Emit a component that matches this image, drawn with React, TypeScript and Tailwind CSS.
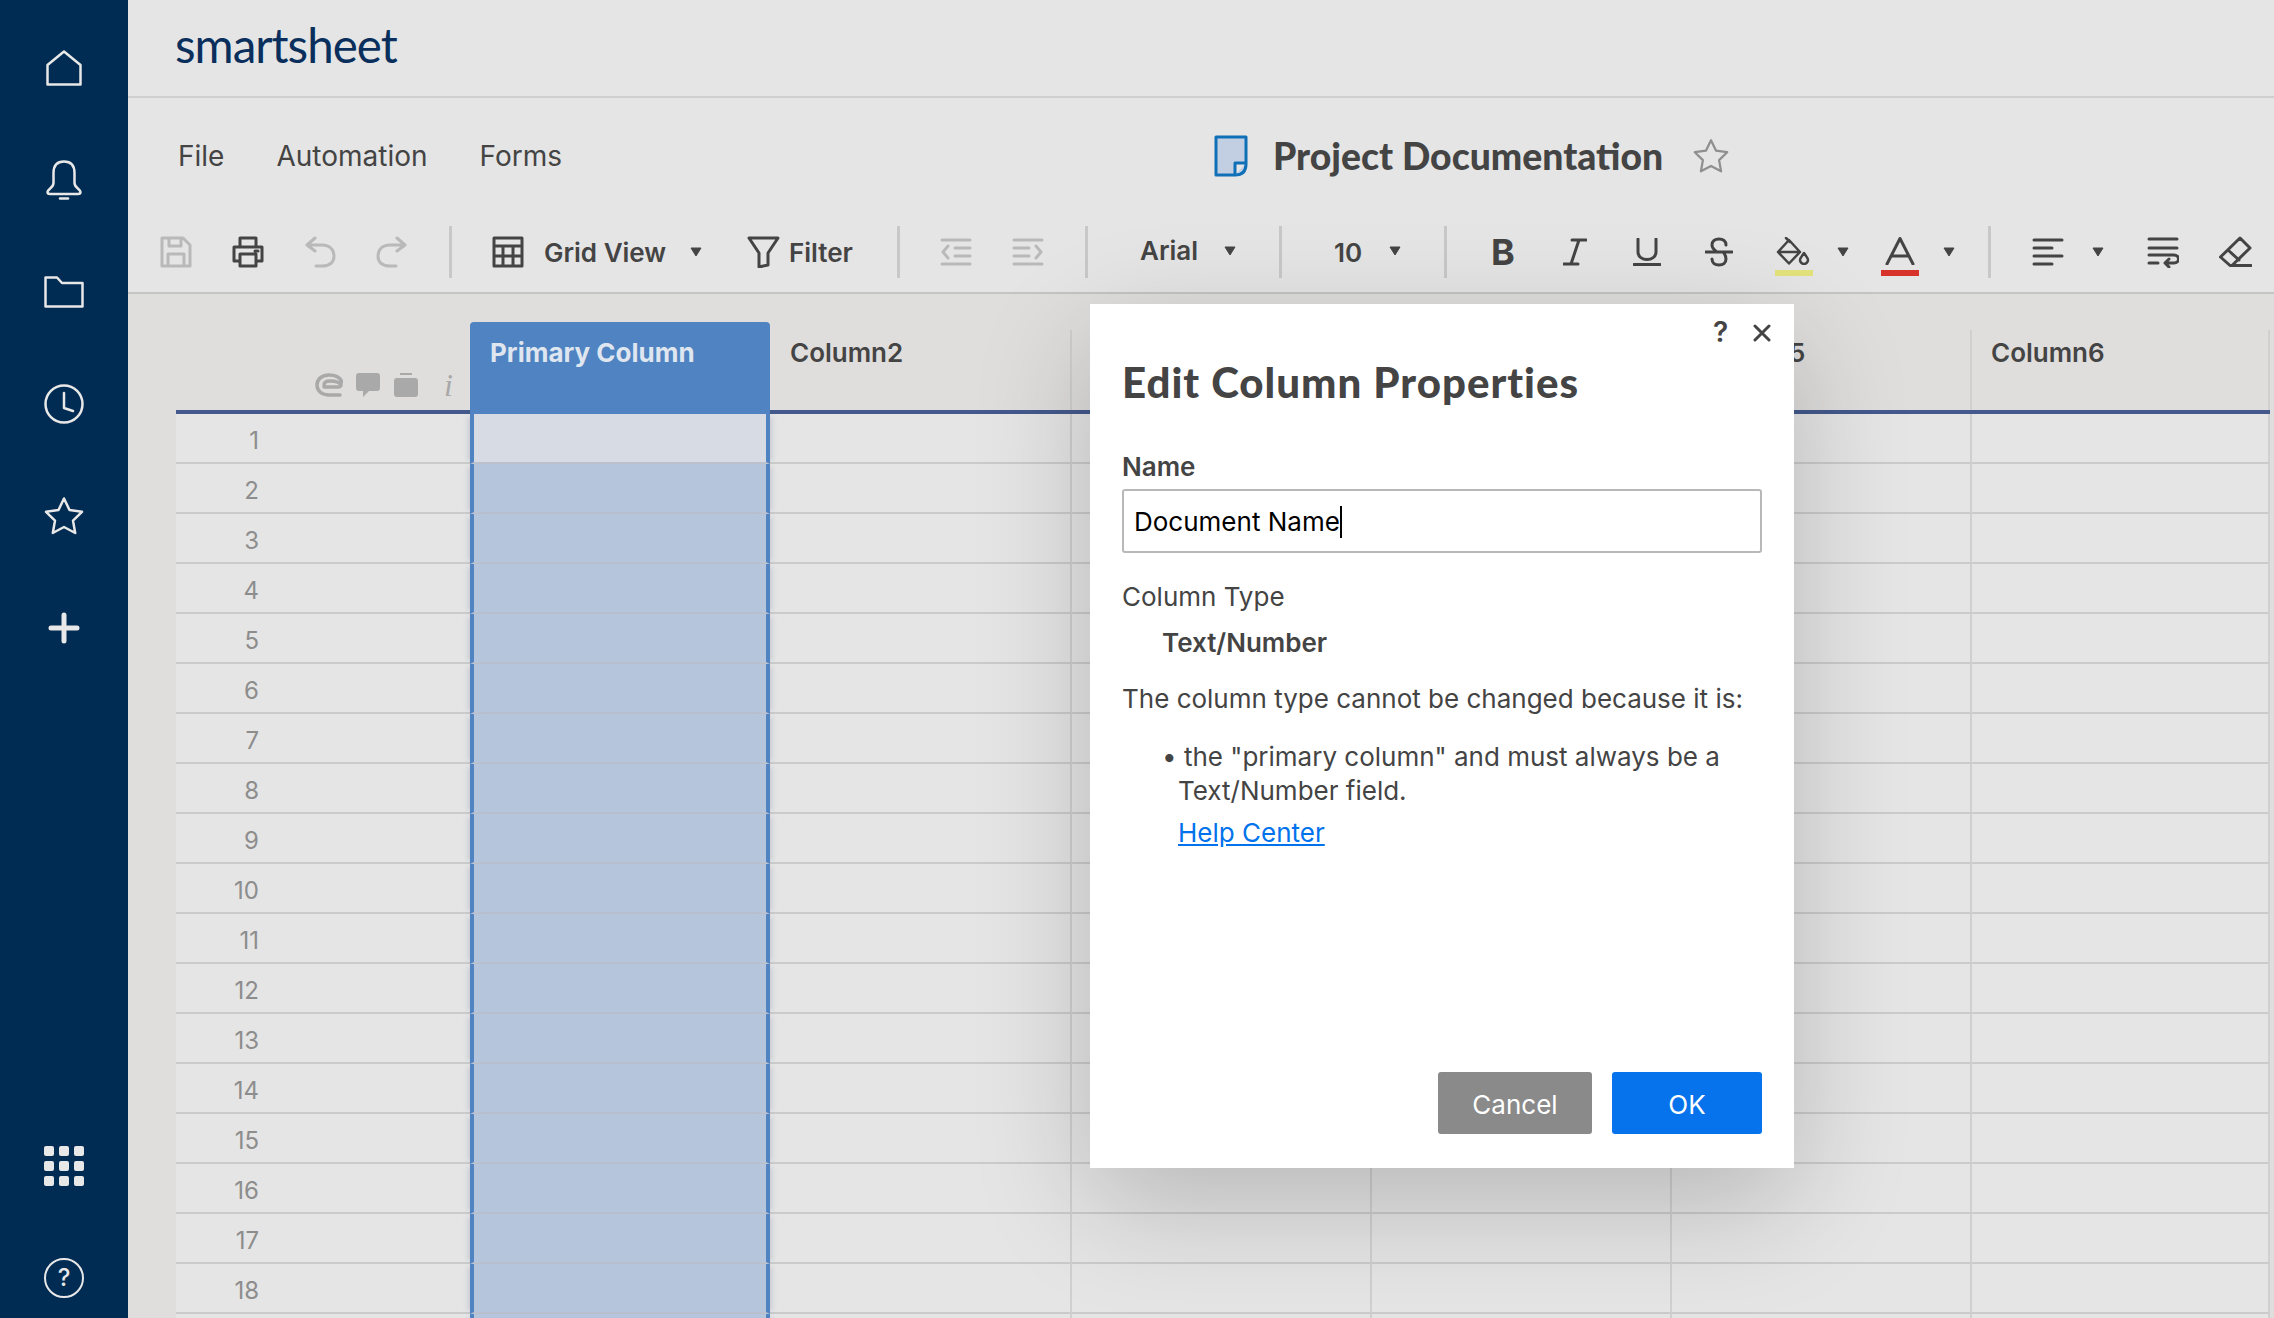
import React from "react";

const D = "#444444";
const G = "#b9b9b9";
const W = "#e8e8e8";

function Caret() {
  return (
    <svg width="12" height="10" viewBox="0 0 12 10" className="shrink-0">
      <path d="M1 1 H11 L6 9 Z" fill={D} stroke={D} strokeWidth="1" strokeLinejoin="round" />
    </svg>
  );
}

function Sep({ className }: { className: string }) {
  return <div className={"w-[3px] h-[52px] bg-[#c8c8c8] shrink-0 " + className} />;
}

function Ico({ w, h, c = D, sw = 3, className = "", children }: { w: number; h: number; c?: string; sw?: number; className?: string; children: React.ReactNode }) {
  return (
    <svg width={w} height={h} viewBox={`0 0 ${w} ${h}`} fill="none" stroke={c} strokeWidth={sw} strokeLinejoin="round" strokeLinecap="round" className={"shrink-0 " + className}>
      {children}
    </svg>
  );
}

function Sidebar() {
  return (
    <aside className="w-[128px] shrink-0 bg-[#002b52] flex flex-col items-center pt-[50px] pb-[20px]">
      <Ico w={36} h={36} c={W} sw={2.5}><path d="M1.5 15 L18 1.5 L34.5 15 V34.5 H1.5 Z" /></Ico>
      <Ico w={36} h={40} c={W} sw={2.5} className="mt-[74px]"><path d="M18 1.5 C11 1.5 7.5 6 7.5 13 V23 C7.5 28 1.5 29 1.5 32 C1.5 33.5 3 34 4 34 H32 C33 34 34.5 33.5 34.5 32 C34.5 29 28.5 28 28.5 23 V13 C28.5 6 25 1.5 18 1.5 Z" /><path d="M14 38.5 H22" /></Ico>
      <Ico w={40} h={32} c={W} sw={2.5} className="mt-[76px]"><path d="M1.5 1.5 H13 L18 7 H38.5 V30.5 H1.5 Z" /></Ico>
      <Ico w={40} h={40} c={W} sw={2.5} className="mt-[76px]"><circle cx="20" cy="20" r="18.5" /><path d="M20 9 V24 L29 27" /></Ico>
      <Ico w={40} h={40} c={W} sw={2.5} className="mt-[72px]"><path d="M20 2.5 L25.5 14 L38 15.8 L29 24.6 L31.2 37 L20 31 L8.8 37 L11 24.6 L2 15.8 L14.5 14 Z" /></Ico>
      <Ico w={32} h={32} c={W} sw={5} className="mt-[76px]"><path d="M16 3 V29 M3 16 H29" /></Ico>
      <div className="mt-auto grid grid-cols-3 gap-x-[5px] gap-y-[5px] w-[40px]">
        {Array.from({ length: 9 }).map((_, i) => (
          <div key={i} className="w-[10px] h-[10px] rounded-[2px] bg-[#e8e8e8]" />
        ))}
      </div>
      <div className="mt-[72px] w-[40px] h-[40px] rounded-full border-[2.5px] border-[#e8e8e8] flex items-center justify-center text-[#e8e8e8] text-[24px] leading-none font-medium">?</div>
    </aside>
  );
}

function Toolbar() {
  return (
    <div className="h-[76px] pb-[2px] flex items-center border-b-2 border-[#c4c4c0] box-content pl-[32px] text-[#444444] text-[26px] font-semibold whitespace-nowrap">
      <Ico w={32} h={32} c={G}><path d="M2 2 H23 L30 9 V30 H2 Z M9 2 V10 H21 V2 M8 30 V18 H24 V30" /></Ico>
      <Ico w={32} h={32} className="ml-[40px]"><path d="M8 10 V2 H24 V10 M8 25 H2 V11 H30 V25 H24 M8 18 H24 V30 H8 Z M23 15 H26" /></Ico>
      <Ico w={32} h={32} c={G} className="ml-[40px]"><path d="M11 2 L3 9 L11 15 M3 9 H18 C26 9 30 14 30 20 C30 26 26 30 18 30 H12" /></Ico>
      <Ico w={32} h={32} c={G} className="ml-[40px]"><path d="M21 2 L29 9 L21 15 M29 9 H14 C6 9 2 14 2 20 C2 26 6 30 14 30 H20" /></Ico>
      <Sep className="ml-[41px]" />
      <Ico w={32} h={32} className="ml-[40px]"><path d="M2 2 H30 V30 H2 Z M2 10 H30 M2 20 H30 M11 10 V30 M21 10 V30" /></Ico>
      <span className="ml-[20px] w-[121px]">Grid View</span>
      <div className="ml-[25px]"><Caret /></div>
      <Ico w={33} h={32} className="ml-[45px]"><path d="M2 2 H31 L21 17 V29 L12 31 V17 Z" /></Ico>
      <span className="ml-[9px] w-[63px]">Filter</span>
      <Sep className="ml-[45px]" />
      <Ico w={32} h={28} c={G} className="ml-[40px]"><path d="M2 2 H30 M2 26 H30 M15 10 H30 M15 18 H30 M8 8 L3 14 L8 20" /></Ico>
      <Ico w={32} h={28} c={G} className="ml-[40px]"><path d="M2 2 H30 M2 26 H30 M2 10 H17 M2 18 H17 M24 8 L29 14 L24 20" /></Ico>
      <Sep className="ml-[41px]" />
      <span className="ml-[52px] w-[57px] -mt-[3px]">Arial</span>
      <div className="ml-[27px] -mt-[3px]"><Caret /></div>
      <Sep className="ml-[43px]" />
      <span className="ml-[52px] w-[29px]">10</span>
      <div className="ml-[26px] -mt-[3px]"><Caret /></div>
      <Sep className="ml-[43px]" />
      <span className="ml-[44px] w-[24px] text-[36px] font-bold leading-none">B</span>
      <Ico w={24} h={28} className="ml-[48px]"><path d="M9 2 H23 M1 26 H15 M16 2 L8 26" /></Ico>
      <Ico w={28} h={28} className="ml-[46px]"><path d="M5 1 V14 C5 24 23 24 23 14 V1 M1 26.5 H27" /></Ico>
      <Ico w={28} h={30} className="ml-[44px]"><path d="M1 15 H27 M21 8 C21 4 18 2 14 2 C10 2 7 4 7 8 C7 11 9 13 12 15 M18 15 C20 17 21 19 21 22 C21 26 18 28 14 28 C10 28 7 26 7 22" /></Ico>
      <div className="ml-[42px] w-[38px] flex flex-col items-center mt-[8px]">
        <Ico w={38} h={28} sw={2.5}><path d="M11 1 L15 5 M14 3 L3 15 L14 26.5 L25 15 Z M3 15 H25 M29 16 C27 19 25 21 25 23 C25 25 27 27 29 27 C31 27 33 25 33 23 C33 21 31 19 29 16 Z" /></Ico>
        <div className="w-[38px] h-[6px] bg-[#e4e27c] mt-[5px]" />
      </div>
      <div className="ml-[24px]"><Caret /></div>
      <div className="ml-[32px] w-[38px] flex flex-col items-center mt-[8px]">
        <Ico w={30} h={28}><path d="M2 27 L15 1.5 L28 27 M7 19 H23" /></Ico>
        <div className="w-[38px] h-[6px] bg-[#d8332a] mt-[5px]" />
      </div>
      <div className="ml-[24px]"><Caret /></div>
      <Sep className="ml-[33px]" />
      <Ico w={32} h={28} className="ml-[41px]"><path d="M2 2 H30 M2 10 H20 M2 18 H30 M2 26 H20" /></Ico>
      <div className="ml-[28px]"><Caret /></div>
      <Ico w={32} h={32} className="ml-[43px]"><path d="M2 3 H30 M2 12 H30 M2 19 H27 C33 19 33 27 27 27 H18 M2 27 H11 M22 23 L18 27 L22 31" /></Ico>
      <Ico w={33} h={32} className="ml-[40px]"><path d="M21 2 L31 12 L13 29.5 H11 L1.5 21 Z M9 14 L20 24 M13 29.5 H32" /></Ico>
    </div>
  );
}

const columns = ["Column2", "", "", "Column5", "Column6"];
const colWidths = ["w-[302px]", "w-[300px]", "w-[300px]", "w-[300px]", "w-[298px]"];
const colPads = ["pl-[20px]", "pl-[20px]", "pl-[20px]", "pl-[20px]", "pl-[19px]"];

function SheetHeader() {
  return (
    <div className="flex h-[116px] shrink-0 text-[26px] font-semibold text-[#444444]">
      <div className="w-[294px] flex items-end justify-end gap-[14px] pr-[18px] pb-[13px]">
        <Ico w={28} h={24} c="#a9a9a9" sw={3.5} className="-mr-[1px]"><path d="M27 9 C25 4 20 2 14 2 C6 2 2 7 2 12 C2 18 7 22 14 22 H25 M9 12 C9 9 12 8 15 8 C19 8 24 8 26 12 C26 13 25 14 24 14 H9" /></Ico>
        <svg width="24" height="24" viewBox="0 0 24 24" className="shrink-0"><path d="M3 0 H21 a3 3 0 0 1 3 3 V15 a3 3 0 0 1 -3 3 H13 L7 24 V18 H3 a3 3 0 0 1 -3 -3 V3 a3 3 0 0 1 3 -3 Z" fill="#a9a9a9" /></svg>
        <svg width="24" height="24" viewBox="0 0 24 24" className="shrink-0"><path d="M6 0 H18 V2 H6 Z" fill="#a9a9a9" /><rect x="0" y="5" width="24" height="19" rx="3" fill="#a9a9a9" /></svg>
        <span className="ml-[12px] w-[8px] text-[#a9a9a9] font-['Liberation_Serif',serif] italic font-normal text-[32px] leading-[24px]">i</span>
      </div>
      <div className="w-[300px] mt-[28px] bg-[#5083c1] rounded-t-[4px] text-[#dfe6f0] font-bold px-[20px] pt-[15px] leading-[32px] whitespace-nowrap">Primary Column</div>
      {columns.map((c, i) => (
        <div key={i} className={"mt-[36px] pt-[7px] leading-[32px] border-r-2 border-[#d0d0d0] " + colWidths[i] + " " + colPads[i]}>{c}</div>
      ))}
    </div>
  );
}

function SheetRow({ n }: { n: number }) {
  return (
    <div className="flex h-[50px] shrink-0">
      <div className="w-[294px] h-[50px] bg-[#e5e5e5] border-b-2 border-[#cbcbcb] pr-[211px] text-right text-[24px] leading-[54px] text-[#8d8d8d]">{n}</div>
      <div className={"relative z-10 w-[300px] h-[50px] border-x-4 border-x-[#5083c1] border-b-2 shadow-[5px_0_5px_-3px_rgba(80,100,140,0.2),-5px_0_5px_-3px_rgba(80,100,140,0.2)] " + (n === 1 ? "bg-[#d6dbe4] border-b-[#bfc5cf]" : "bg-[#b4c5dc] border-b-[#bcc3d0]")} />
      {colWidths.map((w, i) => (
        <div key={i} className={"h-[50px] bg-[#e5e5e5] border-b-2 border-b-[#cbcbcb] border-r-2 border-r-[#d0d0d0] " + w} />
      ))}
    </div>
  );
}

function Sheet() {
  return (
    <div className="flex-1 min-h-0 bg-[#dfdedd] pl-[48px] overflow-hidden">
      <SheetHeader />
      <div className="relative z-20 flex h-[4px] w-[2094px] bg-[#44598c]">
        <div className="w-[294px]" />
        <div className="w-[300px] bg-[#5083c1]" />
      </div>
      {Array.from({ length: 19 }).map((_, i) => (
        <SheetRow key={i} n={i + 1} />
      ))}
    </div>
  );
}

function Dialog() {
  return (
    <div className="absolute z-30 left-[1090px] top-[304px] w-[704px] h-[864px] bg-white shadow-[0_36px_110px_rgba(0,0,0,0.2)] flex flex-col pl-[32px] pr-[32px] pt-[54px] pb-[34px] text-[#444444] text-[26px]">
      <div className="absolute left-[623px] top-[12px] text-[28px] leading-[32px] font-semibold">?</div>
      <svg width="18" height="18" viewBox="0 0 18 18" className="absolute left-[663px] top-[20px]" fill="none" stroke={D} strokeWidth="3" strokeLinecap="round"><path d="M2 2 L16 16 M16 2 L2 16" /></svg>
      <h2 className="font-['Lato',sans-serif] font-black text-[42px] tracking-[1px] leading-[48px] text-[#444444] whitespace-nowrap">Edit Column Properties</h2>
      <div className="mt-[45px] font-semibold leading-[32px]">Name</div>
      <div className="mt-[6px] h-[64px] border-2 border-[#b8b8b8] rounded-[3px] flex items-center pl-[10px] pt-[1px] text-black">
        <span>Document Name</span>
        <span className="w-[2px] h-[32px] bg-black" />
      </div>
      <div className="mt-[28px] leading-[32px]">Column Type</div>
      <div className="mt-[14px] pl-[40px] font-semibold leading-[32px]">Text/Number</div>
      <div className="mt-[24px] leading-[32px]">The column type cannot be changed because it is:</div>
      <div className="mt-[25px] pl-[56px] -indent-[16px] leading-[34px] pr-[30px]">
        <span>•</span> the "primary column" and must always be a Text/Number field.
      </div>
      <a className="mt-[9px] ml-[56px] leading-[32px] text-[#0073ec] underline self-start">Help Center</a>
      <div className="mt-auto flex justify-end gap-[20px] text-white">
        <button className="w-[154px] h-[62px] rounded-[3px] bg-[#8a8a8a] pt-[3px]">Cancel</button>
        <button className="w-[150px] h-[62px] rounded-[3px] bg-[#0673ec] pt-[3px]">OK</button>
      </div>
    </div>
  );
}

export default function App() {
  return (
    <div className="relative w-[2274px] h-[1318px] overflow-hidden flex bg-[#e5e5e5] font-['Inter',sans-serif]">
      <Sidebar />
      <main className="flex-1 min-w-0 flex flex-col">
        <header className="h-[98px] shrink-0 border-b-2 border-[#cfcfcf] pl-[47px] flex items-center">
          <span className="font-['Lato',sans-serif] text-[#0a2f5c] text-[47.5px] leading-none -tracking-[1px] -mt-[6px]">smartsheet</span>
        </header>
        <div className="h-[116px] shrink-0 flex items-center">
          <nav className="w-[1086px] pl-[50px] flex gap-[52px] text-[28px] text-[#444444]">
            <span>File</span>
            <span>Automation</span>
            <span>Forms</span>
          </nav>
          <svg width="34" height="42" viewBox="0 0 34 42" fill="#c2cfe3" stroke="#0f70b8" strokeWidth="3" strokeLinejoin="round"><path d="M2 2 H32 V29 Q32 40 21 40 H2 Z" /><path d="M21 40 V28 H32" fill="#e5e5e5" /></svg>
          <span className="ml-[25px] font-['Lato',sans-serif] font-black text-[37.3px] text-[#444444]">Project Documentation</span>
          <svg width="36" height="36" viewBox="0 0 40 40" fill="none" stroke="#8f8f8f" strokeWidth="2.5" strokeLinejoin="round" className="ml-[30px]"><path d="M20 2.5 L25.5 14 L38 15.8 L29 24.6 L31.2 37 L20 31 L8.8 37 L11 24.6 L2 15.8 L14.5 14 Z" /></svg>
        </div>
        <Toolbar />
        <Sheet />
      </main>
      <Dialog />
    </div>
  );
}
